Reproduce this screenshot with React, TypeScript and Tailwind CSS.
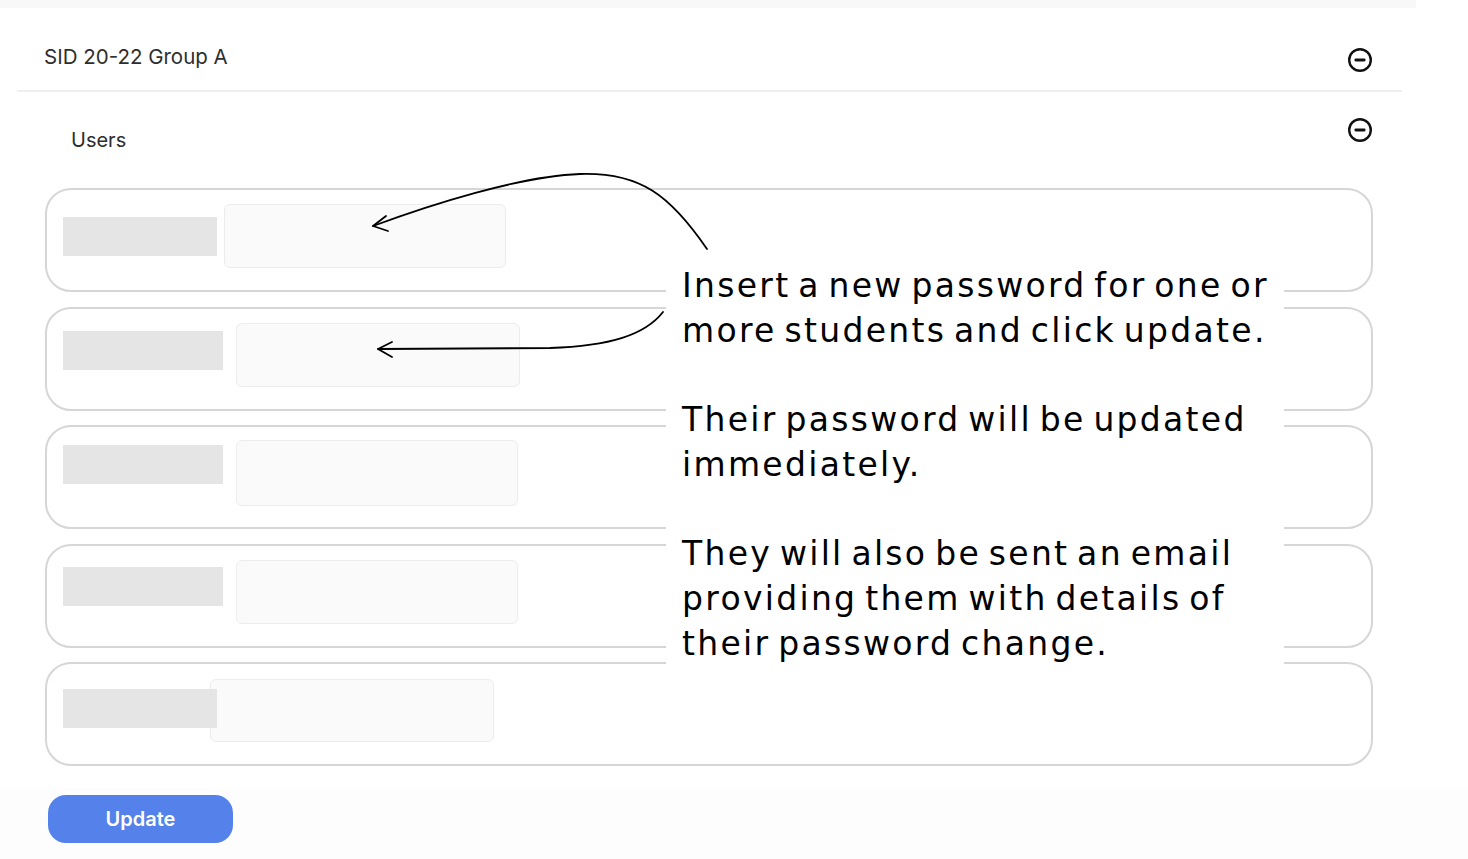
import React from "react"

const rows = [
  { label: "w-[154px] mt-[27px]", input: "w-[282px] h-[64px] mt-[14px] ml-[7px]" },
  { label: "w-[160px] mt-[22px]", input: "w-[284px] h-[64px] mt-[14px] ml-[13px]" },
  { label: "w-[160px] mt-[18px]", input: "w-[282px] h-[66px] mt-[13px] ml-[13px]" },
  { label: "w-[160px] mt-[21px]", input: "w-[282px] h-[64px] mt-[14px] ml-[13px]" },
  { label: "w-[154px] mt-[25px]", input: "w-[284px] h-[63px] mt-[15px] -ml-[7px]" },
]

function MinusCircle() {
  return (
    <svg width="26" height="26" viewBox="0 0 26 26" fill="none" stroke="#111" strokeLinecap="round">
      <circle cx="13" cy="13" r="10.8" strokeWidth="2.4" />
      <line x1="8.8" y1="13" x2="17.2" y2="13" strokeWidth="2.8" />
    </svg>
  )
}

export default function App() {
  return (
    <div className="relative w-full h-[859px] bg-white overflow-hidden flex flex-col font-['Inter',sans-serif] text-[#2e2e2e]">
      {/* top strip */}
      <div className="h-[8px] w-[1416px] bg-[#f8f8f8] shrink-0" />

      {/* group header */}
      <div className="h-[82px] flex items-start justify-between pl-[44px] pr-[95px] shrink-0">
        <span className="mt-[35px] text-[20.5px] leading-[28px]">SID 20-22 Group A</span>
        <div className="mt-[39px]">
          <MinusCircle />
        </div>
      </div>
      <div className="h-[2px] ml-[17px] w-[1385px] bg-[#efefef] shrink-0" />

      {/* users header */}
      <div className="h-[96px] flex items-start justify-between pl-[71px] pr-[95px] shrink-0">
        <span className="mt-[34px] text-[20px] leading-[28px]">Users</span>
        <div className="mt-[25px]">
          <MinusCircle />
        </div>
      </div>

      {/* user rows */}
      <div className="flex flex-col gap-[14.5px] ml-[45px] w-[1328px] shrink-0">
        {rows.map((r, i) => (
          <div key={i} className="h-[104px] border-2 border-[#d6d6d6] rounded-[26px] flex items-start pl-[16px]">
            <div className={"relative z-10 h-[39px] bg-[#e5e5e5] " + r.label} />
            <div className={"bg-[#fafafa] border border-[#ececec] rounded-[6px] " + r.input} />
          </div>
        ))}
      </div>

      {/* footer */}
      <div className="mt-[22px] flex-1 bg-[#fdfdfd] pt-[7px] pl-[48px]">
        <button className="w-[185px] h-[48px] rounded-[18px] bg-[#5581ea] text-white text-[20px] font-semibold">
          Update
        </button>
      </div>

      {/* annotation */}
      <div className="absolute left-[666px] top-[264px] w-[618px] h-[402px] bg-white pl-[16px] font-['DejaVu_Sans',sans-serif] text-[33px] leading-[44.7px] text-black tracking-[2.3px] [word-spacing:-5px] whitespace-nowrap">
        Insert a new password for one or
        <br />
        more students and click update.
        <br />
        <br />
        Their password will be updated
        <br />
        immediately.
        <br />
        <br />
        They will also be sent an email
        <br />
        providing them with details of
        <br />
        their password change.
      </div>

      <svg className="absolute inset-0 pointer-events-none" width="1468" height="859" viewBox="0 0 1468 859" fill="none" stroke="#000" strokeWidth="1.8" strokeLinecap="round" strokeLinejoin="round">
        <path d="M707 249 C670 195 640 172 580 174 C520 176 430 205 373 226" />
        <path d="M386 216 L373 226 L388 231" />
        <path d="M663 312 C645 335 610 346 550 348 L378 349" />
        <path d="M392 342 L378 349 L392 357" />
      </svg>
    </div>
  )
}
